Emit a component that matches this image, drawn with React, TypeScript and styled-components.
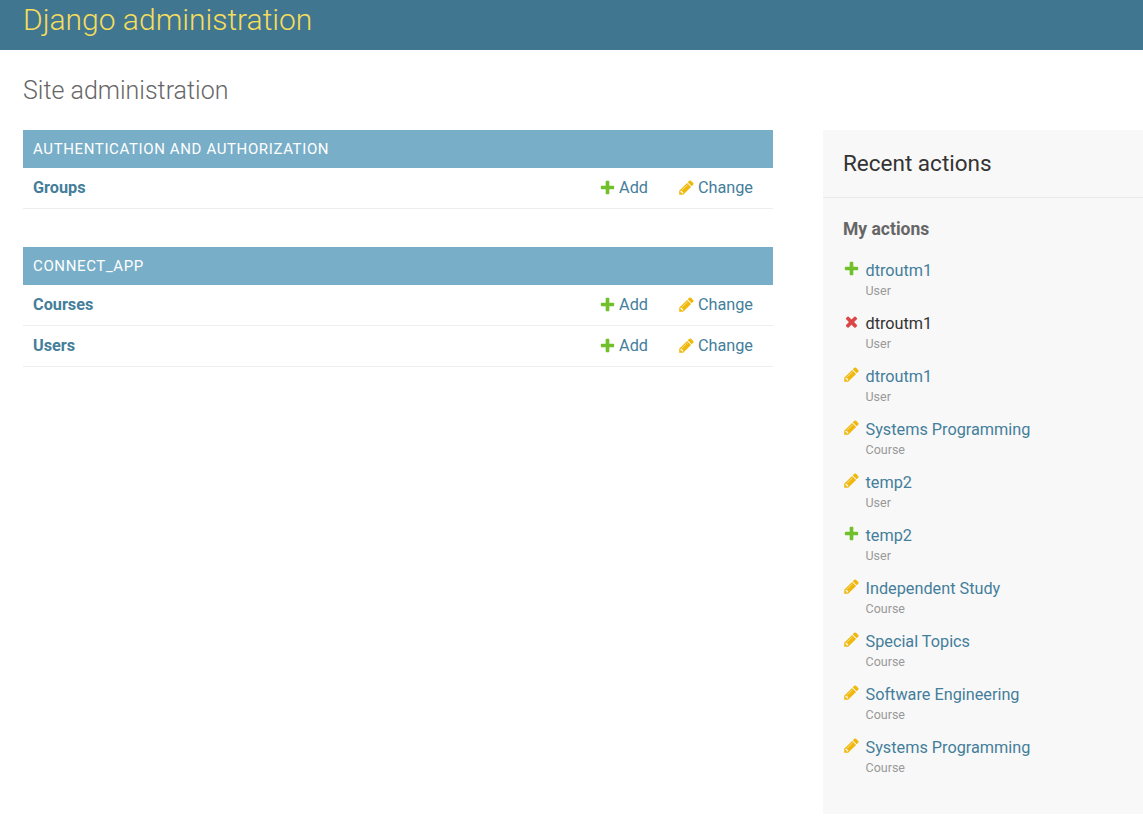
import React from "react";
import styled, { createGlobalStyle } from "styled-components";

const Global = createGlobalStyle`
  html, body { margin: 0; padding: 0; height: 825px; overflow: hidden; background: #fff; }
  body { font-family: Roboto, "Liberation Sans", sans-serif; color: #333; }
  #root { height: 825px; }
  * { box-sizing: border-box; }
`;

const Header = styled.header`
  height: 50px;
  background: #417690;
  padding-left: 23px;
  overflow: hidden;
`;
const Branding = styled.h1`
  margin: 0;
  font-size: 30px;
  line-height: 40px;
  font-weight: 300;
  color: #f5dd5d;
`;
const PageTitle = styled.h2`
  margin: 0;
  padding: 26px 23px 0;
  height: 80px;
  font-size: 25px;
  line-height: 30px;
  font-weight: 300;
  color: #666;
`;
const Layout = styled.div`
  display: flex;
  justify-content: space-between;
  padding-left: 23px;
`;
const Main = styled.main`
  width: 750px;
  display: flex;
  flex-direction: column;
  gap: 38px;
`;
const Caption = styled.div`
  height: 38px;
  display: flex;
  align-items: center;
  padding: 0 10px;
  background: #79aec8;
  color: #fff;
  font-size: 15px;
  letter-spacing: 0.625px;
`;
const Row = styled.div`
  height: 41px;
  display: flex;
  align-items: center;
  padding: 0 20px 1px 10px;
  border-bottom: 1px solid #eee;
  font-size: 16.25px;
`;
const ModelName = styled.a`
  flex: 1;
  color: #447e9b;
  font-weight: 700;
`;
const RowLink = styled.a<{ $width: number }>`
  width: ${(p) => p.$width}px;
  display: flex;
  align-items: center;
  justify-content: flex-end;
  gap: 3px;
  color: #447e9b;
`;
const Icon = styled.svg`
  width: 17px;
  height: 17px;
  flex: none;
  display: block;
`;
const Sidebar = styled.aside`
  width: 320px;
  height: 684px;
  background: #f8f8f8;
`;
const SideTitle = styled.h2`
  margin: 0;
  height: 68px;
  padding: 18px 20px 0;
  border-bottom: 1px solid #eaeaea;
  font-size: 22.5px;
  line-height: 30px;
  font-weight: 400;
  color: #333;
`;
const SideSub = styled.h3`
  margin: 0;
  padding: 19px 20px 0;
  height: 56px;
  font-size: 17.5px;
  line-height: 24px;
  font-weight: 700;
  color: #666;
`;
const ActionList = styled.ul`
  margin: 0;
  padding: 0 20px;
  list-style: none;
`;
const Action = styled.li`
  height: 53px;
  display: flex;
  gap: 5.5px;
`;
const ActionIcon = styled(Icon)`
  margin-top: 6px;
`;
const ActionBody = styled.div`
  display: flex;
  flex-direction: column;
`;
const ActionName = styled.a<{ $deleted?: boolean }>`
  font-size: 16.25px;
  line-height: 20px;
  margin-top: 7px;
  color: ${(p) => (p.$deleted ? "#333" : "#447e9b")};
`;
const ActionType = styled.span`
  font-size: 12.5px;
  line-height: 20px;
  color: #999;
`;

type Kind = "add" | "change" | "delete";
const glyphs: Record<Kind, { fill: string; d: string }> = {
  add: {
    fill: "#70bf2b",
    d: "M1600 796v192q0 40-28 68t-68 28h-416v416q0 40-28 68t-68 28h-192q-40 0-68-28t-28-68v-416h-416q-40 0-68-28t-28-68v-192q0-40 28-68t68-28h416v-416q0-40 28-68t68-28h192q40 0 68 28t28 68v416h416q40 0 68 28t28 68z",
  },
  change: {
    fill: "#efb80b",
    d: "M491 1536l91-91-235-235-91 91v107h128v128h107zm523-928q0-22-22-22-10 0-17 7l-542 542q-7 7-7 17 0 22 22 22 10 0 17-7l542-542q7-7 7-17zm-54-192l416 416-832 832h-416v-416zm683 96q0 53-37 90l-166 166-416-416 166-165q36-38 90-38 53 0 91 38l235 234q37 39 37 91z",
  },
  delete: {
    fill: "#dd4646",
    d: "M1490 1322q0 40-28 68l-136 136q-28 28-68 28t-68-28l-294-294-294 294q-28 28-68 28t-68-28l-136-136q-28-28-28-68t28-68l294-294-294-294q-28-28-28-68t28-68l136-136q28-28 68-28t68 28l294 294 294-294q28-28 68-28t68 28l136 136q28 28 28 68t-28 68l-294 294 294 294q28 28 28 68z",
  },
};

const Glyph = ({ kind, as: As = Icon }: { kind: Kind; as?: typeof Icon }) => (
  <As viewBox="0 0 1792 1792" aria-hidden="true">
    <path fill={glyphs[kind].fill} d={glyphs[kind].d} />
  </As>
);

const apps = [
  { name: "AUTHENTICATION AND AUTHORIZATION", models: ["Groups"] },
  { name: "CONNECT_APP", models: ["Courses", "Users"] },
];

const actions: { kind: Kind; name: string; type: string }[] = [
  { kind: "add", name: "dtroutm1", type: "User" },
  { kind: "delete", name: "dtroutm1", type: "User" },
  { kind: "change", name: "dtroutm1", type: "User" },
  { kind: "change", name: "Systems Programming", type: "Course" },
  { kind: "change", name: "temp2", type: "User" },
  { kind: "add", name: "temp2", type: "User" },
  { kind: "change", name: "Independent Study", type: "Course" },
  { kind: "change", name: "Special Topics", type: "Course" },
  { kind: "change", name: "Software Engineering", type: "Course" },
  { kind: "change", name: "Systems Programming", type: "Course" },
];

export default function App() {
  return (
    <>
      <Global />
      <Header>
        <Branding>Django administration</Branding>
      </Header>
      <PageTitle>Site administration</PageTitle>
      <Layout>
        <Main>
          {apps.map((app) => (
            <section key={app.name}>
              <Caption>{app.name}</Caption>
              {app.models.map((m) => (
                <Row key={m}>
                  <ModelName>{m}</ModelName>
                  <RowLink $width={48}>
                    <Glyph kind="add" />
                    Add
                  </RowLink>
                  <RowLink $width={105}>
                    <Glyph kind="change" />
                    Change
                  </RowLink>
                </Row>
              ))}
            </section>
          ))}
        </Main>
        <Sidebar>
          <SideTitle>Recent actions</SideTitle>
          <SideSub>My actions</SideSub>
          <ActionList>
            {actions.map((a, i) => (
              <Action key={i}>
                <Glyph kind={a.kind} as={ActionIcon} />
                <ActionBody>
                  <ActionName $deleted={a.kind === "delete"}>{a.name}</ActionName>
                  <ActionType>{a.type}</ActionType>
                </ActionBody>
              </Action>
            ))}
          </ActionList>
        </Sidebar>
      </Layout>
    </>
  );
}
